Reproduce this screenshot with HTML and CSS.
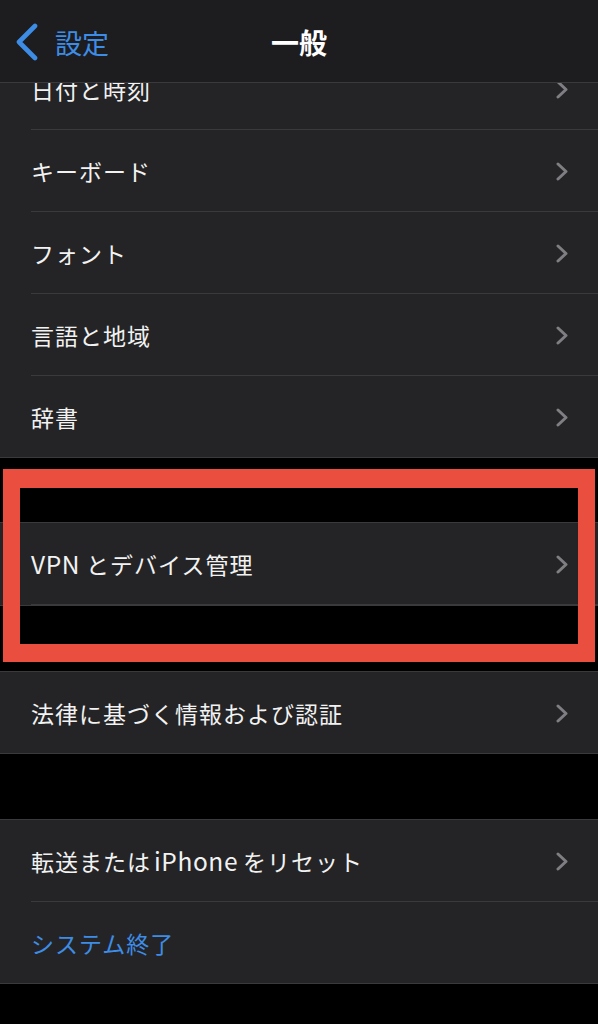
FILE: index.html
```html
<!DOCTYPE html>
<html lang="ja">
<head>
<meta charset="utf-8">
<title>一般</title>
<link rel="stylesheet" href="styles.css">
</head>
<body>
<div class="screen">
  <header class="navbar">
    <div class="back">
      <svg class="back-icon" width="24" height="38" viewBox="0 0 24 38" aria-hidden="true">
        <polyline points="20,3 4,19 20,35" fill="none" stroke="#3d8de6" stroke-width="4.6" stroke-linecap="round" stroke-linejoin="round"/>
      </svg>
      <span class="back-label">設定</span>
    </div>
    <h1 class="title">一般</h1>
    <div class="spacer"></div>
  </header>

  <main class="scroll">
    <section class="group first">
      <div class="row"><div class="row-inner"><span class="label">日付と時刻</span><svg class="chev" width="14" height="19" viewBox="0 0 14 19"><polyline points="3,2 11,9.5 3,17" fill="none" stroke="#7e7e83" stroke-width="3" stroke-linecap="round" stroke-linejoin="round"/></svg></div></div>
      <div class="row"><div class="row-inner"><span class="label">キーボード</span><svg class="chev" width="14" height="19" viewBox="0 0 14 19"><polyline points="3,2 11,9.5 3,17" fill="none" stroke="#7e7e83" stroke-width="3" stroke-linecap="round" stroke-linejoin="round"/></svg></div></div>
      <div class="row"><div class="row-inner"><span class="label">フォント</span><svg class="chev" width="14" height="19" viewBox="0 0 14 19"><polyline points="3,2 11,9.5 3,17" fill="none" stroke="#7e7e83" stroke-width="3" stroke-linecap="round" stroke-linejoin="round"/></svg></div></div>
      <div class="row"><div class="row-inner"><span class="label">言語と地域</span><svg class="chev" width="14" height="19" viewBox="0 0 14 19"><polyline points="3,2 11,9.5 3,17" fill="none" stroke="#7e7e83" stroke-width="3" stroke-linecap="round" stroke-linejoin="round"/></svg></div></div>
      <div class="row"><div class="row-inner"><span class="label">辞書</span><svg class="chev" width="14" height="19" viewBox="0 0 14 19"><polyline points="3,2 11,9.5 3,17" fill="none" stroke="#7e7e83" stroke-width="3" stroke-linecap="round" stroke-linejoin="round"/></svg></div></div>
    </section>

    <section class="group highlighted">
      <div class="row"><div class="row-inner"><span class="label"><span class="latin lead">VPN</span>とデバイス管理</span><svg class="chev" width="14" height="19" viewBox="0 0 14 19"><polyline points="3,2 11,9.5 3,17" fill="none" stroke="#7e7e83" stroke-width="3" stroke-linecap="round" stroke-linejoin="round"/></svg></div></div>
      <div class="annotation" aria-hidden="true"></div>
    </section>

    <section class="group">
      <div class="row"><div class="row-inner"><span class="label">法律に基づく情報および認証</span><svg class="chev" width="14" height="19" viewBox="0 0 14 19"><polyline points="3,2 11,9.5 3,17" fill="none" stroke="#7e7e83" stroke-width="3" stroke-linecap="round" stroke-linejoin="round"/></svg></div></div>
    </section>

    <section class="group">
      <div class="row"><div class="row-inner"><span class="label">転送または<span class="latin">iPhone</span>をリセット</span><svg class="chev" width="14" height="19" viewBox="0 0 14 19"><polyline points="3,2 11,9.5 3,17" fill="none" stroke="#7e7e83" stroke-width="3" stroke-linecap="round" stroke-linejoin="round"/></svg></div></div>
      <div class="row"><div class="row-inner"><span class="label action">システム終了</span></div></div>
    </section>
  </main>
</div>
</body>
</html>
```

FILE: styles.css
```css
* {
  box-sizing: border-box;
}

html, body {
  margin: 0;
  padding: 0;
  background: #000;
}

body {
  font-family: "Noto Sans CJK JP", "Noto Sans", "Liberation Sans", sans-serif;
  color: #f2f2f2;
}

.screen {
  width: 598px;
  height: 1024px;
  overflow: hidden;
  display: flex;
  flex-direction: column;
  background: #000;
}

.navbar {
  flex: 0 0 auto;
  height: 83px;
  background: #1d1d1f;
  border-bottom: 1px solid #3a3a3c;
  display: grid;
  grid-template-columns: 1fr auto 1fr;
  align-items: center;
  position: relative;
  z-index: 2;
}

.back {
  display: flex;
  align-items: center;
  padding-left: 15px;
  padding-top: 1px;
  gap: 16px;
  color: #3d8de6;
}

.back-icon {
  display: block;
}

.back-label {
  font-size: 27px;
  line-height: 1;
  padding-top: 2px;
}

.title {
  margin: 0;
  font-size: 28px;
  font-weight: 700;
  line-height: 1;
  color: #fff;
  padding-top: 2px;
}

.scroll {
  flex: 1 1 auto;
  overflow: hidden;
  position: relative;
  z-index: 1;
}

.group {
  background: #242426;
  border-top: 1px solid #3a3a3c;
  border-bottom: 1px solid #3a3a3c;
  margin-top: 65px;
}

.group.first {
  margin-top: -36px;
}

.group.highlighted {
  position: relative;
  margin-top: 64px;
}

.row {
  padding-left: 31px;
}

.row-inner {
  height: 82px;
  display: flex;
  align-items: center;
  justify-content: space-between;
  padding-right: 29px;
  border-bottom: 1px solid #3a3a3c;
}

.row:last-of-type .row-inner {
  border-bottom: none;
  height: 81px;
}

.label {
  font-size: 23px;
  line-height: 1;
  padding-top: 2px;
  letter-spacing: 1px;
  white-space: nowrap;
}

.latin {
  font-size: 24.5px;
  letter-spacing: 0.6px;
  margin: 0 5px 0 3px;
}

.latin.lead {
  margin-left: 0;
  margin-right: 6px;
}

.label.action {
  color: #3d8de6;
}

.chev {
  display: block;
  flex: 0 0 auto;
  margin-top: 2px;
}

.annotation {
  position: absolute;
  left: 3px;
  right: 3px;
  top: -54px;
  bottom: -57px;
  border: 17px solid #e94e3e;
  border-top-width: 19px;
  border-bottom-width: 18px;
  pointer-events: none;
}
```
